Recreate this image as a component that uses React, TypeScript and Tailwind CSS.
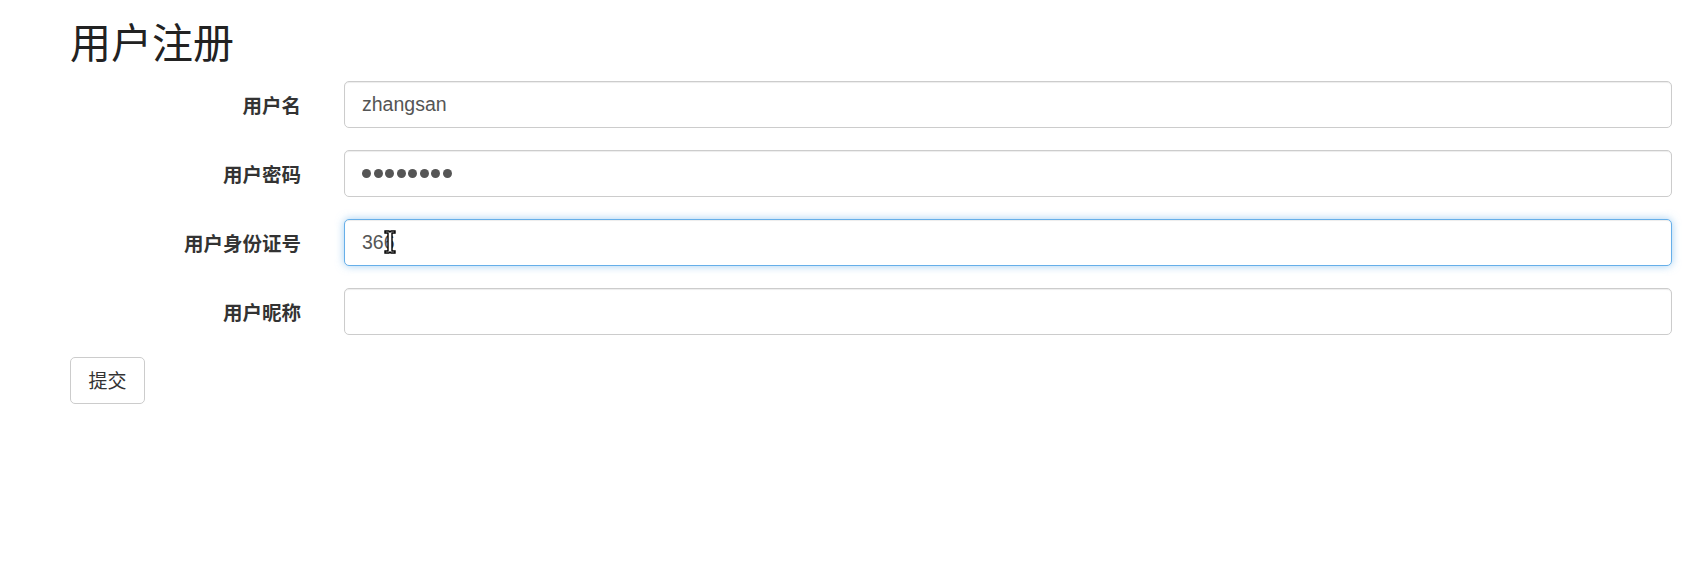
import React from "react";

const cjk = "font-['Noto_Sans_CJK_SC','Noto_Sans',sans-serif]";

const fields = [
  { id: "username", label: "用户名", value: "zhangsan" },
  { id: "password", label: "用户密码", value: "", password: true },
  { id: "idcard", label: "用户身份证号", value: "366", focused: true },
  { id: "nickname", label: "用户昵称", value: "" },
];

const inputBase =
  "w-full h-[47px] rounded-[5px] border bg-white px-[17px] text-[19.5px] text-[#555] font-['Liberation_Sans',Arial,sans-serif] outline-none";

// mouse text cursor sitting over the id field
const IBeam = () => (
  <svg
    className="absolute left-[40px] top-[11px] pointer-events-none"
    width="12"
    height="24"
    viewBox="0 0 12 24"
  >
    <path
      d="M1 1h4l1 1 1-1h4v2H8v18h3v2H7l-1-1-1 1H1v-2h3V3H1z"
      fill="#fff"
      stroke="#000"
      strokeWidth="1.4"
    />
  </svg>
);

export default function App() {
  return (
    <div className="min-h-screen bg-white pl-[70px] pr-[19px] pt-[17px]">
      <h2 className={`${cjk} text-[41px] leading-[1.15] text-[#222] font-normal`}>用户注册</h2>

      <form className="mt-[17px] flex flex-col gap-[22px]" onSubmit={(e) => e.preventDefault()}>
        {fields.map((f) => (
          <div key={f.id} className="flex items-center">
            <label
              htmlFor={f.id}
              className={`${cjk} w-[231px] shrink-0 text-right text-[19.5px] font-bold text-[#333]`}
            >
              {f.label}
            </label>
            <div className="ml-[43px] flex-1 relative">
              {f.password ? (
                <div
                  id={f.id}
                  className={`${inputBase} border-[#ccc] shadow-[inset_0_1px_1px_rgba(0,0,0,0.075)] flex items-center gap-[2.5px]`}
                >
                  {Array.from({ length: 8 }).map((_, i) => (
                    <span key={i} className="w-[9px] h-[9px] rounded-full bg-[#555]" />
                  ))}
                </div>
              ) : (
                <input
                  id={f.id}
                  readOnly
                  defaultValue={f.value}
                  className={`${inputBase} ${
                    f.focused
                      ? "border-[#66afe9] shadow-[inset_0_1px_1px_rgba(0,0,0,0.075),0_0_8px_rgba(102,175,233,0.6)]"
                      : "border-[#ccc] shadow-[inset_0_1px_1px_rgba(0,0,0,0.075)]"
                  }`}
                />
              )}
              {f.focused && <IBeam />}
            </div>
          </div>
        ))}

        <div>
          <button
            type="submit"
            className={`${cjk} h-[47px] w-[75px] rounded-[5px] border border-[#ccc] bg-white text-[19px] text-[#333]`}
          >
            提交
          </button>
        </div>
      </form>
    </div>
  );
}
